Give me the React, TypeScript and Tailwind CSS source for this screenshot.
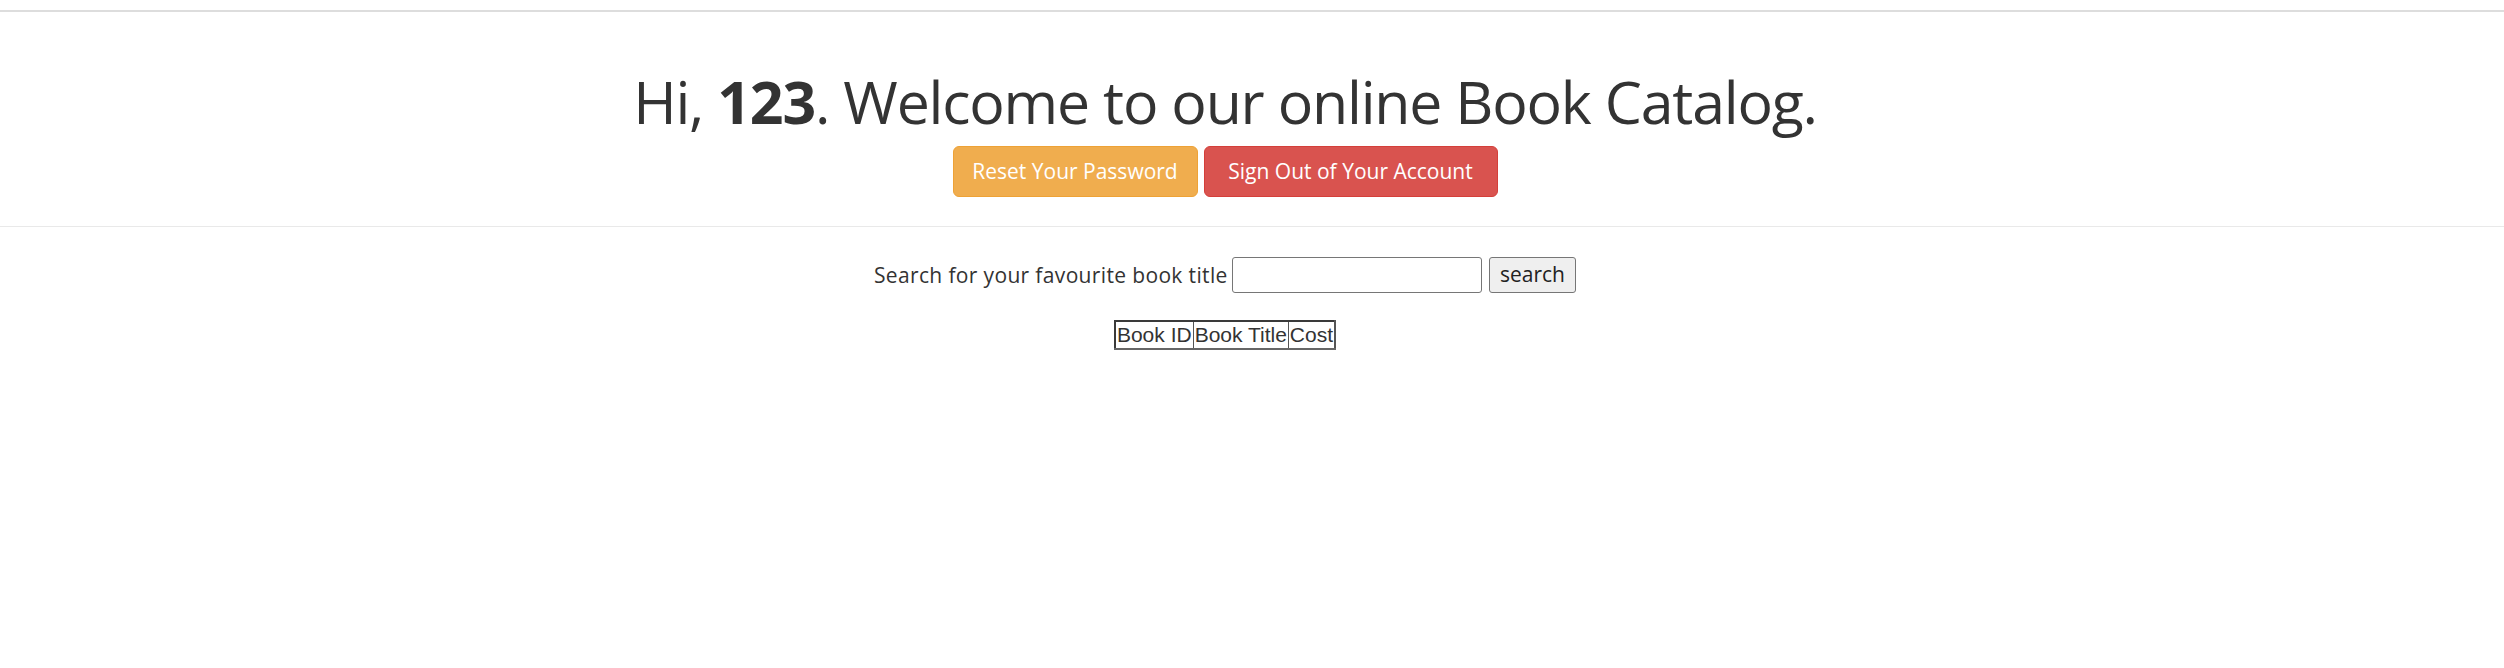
import React from "react";

// Book catalog landing page (after login)
export default function App() {
  return (
    <div className="min-h-[668px] bg-white text-[#333] font-['Open_Sans',sans-serif]">
      {/* top rule */}
      <div className="mt-[10px] h-[2px] w-full bg-[#dddddd]" />

      {/* Greeting header */}
      <div className="w-[2450px] flex flex-col items-center">
        <h1 className="mt-[56px] h-[66px] leading-[66px] text-[59px] tracking-[-1.2px] font-normal whitespace-nowrap">
          Hi, <b className="font-bold">123</b>. Welcome to our online Book Catalog.
        </h1>
        <div className="mt-[12px] flex gap-[6px]">
          <a
            href="#"
            className="w-[245px] h-[51px] flex items-center justify-center rounded-[6px] border border-[#eea236] bg-[#f0ad4e] text-white text-[21px]"
          >
            Reset Your Password
          </a>
          <a
            href="#"
            className="w-[294px] h-[51px] flex items-center justify-center rounded-[6px] border border-[#d43f3a] bg-[#d9534f] text-white text-[21px]"
          >
            Sign Out of Your Account
          </a>
        </div>
      </div>

      {/* divider */}
      <div className="mt-[29px] h-[1px] w-full bg-[#e9e9e9]" />

      {/* Search form */}
      <div className="w-[2450px] flex flex-col items-center">
        <form className="mt-[30px] flex items-center h-[36px]" onSubmit={(e) => e.preventDefault()}>
          <label className="w-[354px] whitespace-nowrap text-[21px] tracking-[0.35px] leading-[36px]">
            Search for your favourite book title
          </label>
          <input
            type="text"
            className="ml-[4px] w-[250px] h-[36px] rounded-[3px] border border-[#767676] bg-white px-2 text-[21px] outline-none"
          />
          <button
            type="submit"
            className="ml-[7px] w-[87px] h-[36px] rounded-[3px] border border-[#767676] bg-[#efefef] text-[21px] text-[#222]"
          >
            search
          </button>
        </form>

        {/* Results table */}
        <table className="mt-[27px] border-collapse border-2 border-t-[#3a3a3a] border-l-[#3a3a3a] border-r-[#555] border-b-[#666] font-['Liberation_Sans',Arial,sans-serif] text-[21px] text-[#333]">
          <tbody>
            <tr>
              <td className="border border-[#555] px-[1px] py-[1px] leading-[24px]">Book ID</td>
              <td className="border border-[#555] px-[1px] py-[1px] leading-[24px]">Book Title</td>
              <td className="border border-[#555] px-[1px] py-[1px] leading-[24px]">Cost</td>
            </tr>
          </tbody>
        </table>
      </div>
    </div>
  );
}
